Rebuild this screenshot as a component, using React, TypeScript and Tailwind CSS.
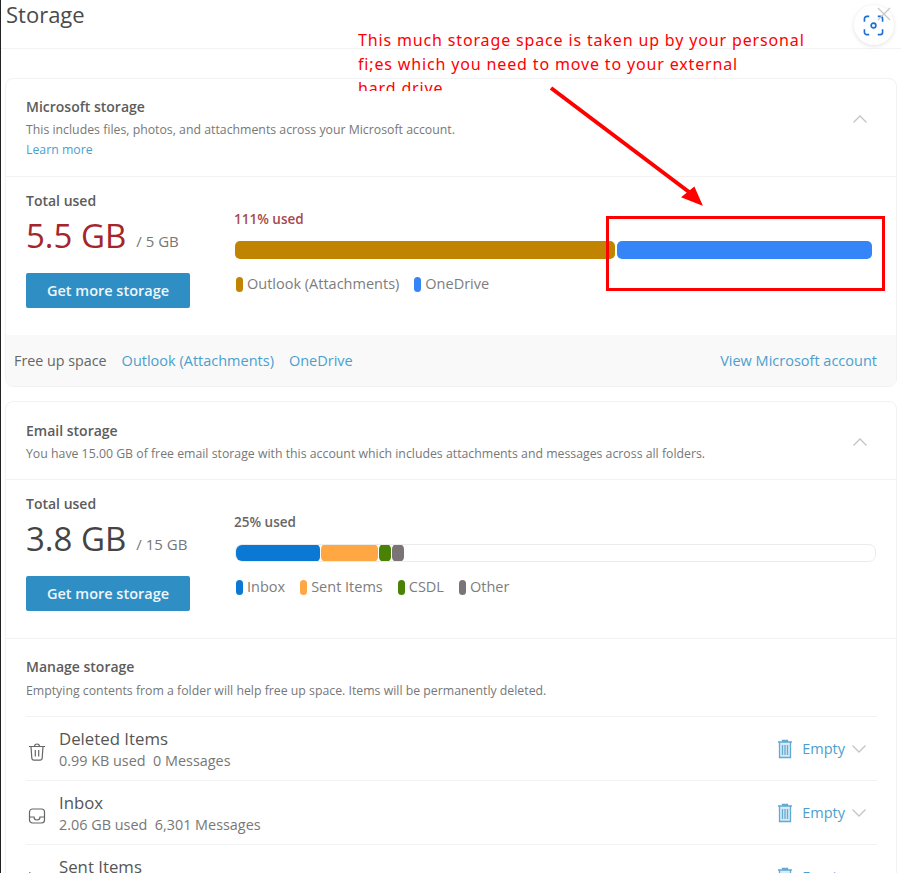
const sans = "font-['Open_Sans','Noto_Sans',sans-serif]";

function Dot({ color }: { color: string }) {
  return <span className={`ml-px inline-block h-[15px] w-[7px] rounded-full ${color}`} />;
}

function Legend({ items }: { items: [string, string][] }) {
  return (
    <div className="mt-[15px] flex h-[20px] items-center gap-[14px]">
      {items.map(([label, color]) => (
        <span key={label} className="flex items-center gap-[4px] text-[14.5px] text-[#7d7d7d]">
          <Dot color={color} />
          {label}
        </span>
      ))}
    </div>
  );
}

function Chevron({ up }: { up?: boolean }) {
  return (
    <svg width="16" height="10" viewBox="0 0 16 10" fill="none" stroke="#c4c4c4" strokeWidth="1.3">
      <path d={up ? "M1.5 8.5 8 2l6.5 6.5" : "M1.5 1.5 8 8l6.5-6.5"} />
    </svg>
  );
}

function Total({ value, quota, red }: { value: string; quota: string; red?: boolean }) {
  return (
    <div className="w-[209px] shrink-0">
      <div className="text-[14px] leading-[20px] font-semibold text-[#5c5c5c]">Total used</div>
      <div className="mt-[1px] flex h-[48px] items-center">
        <span className={`text-[33px] leading-[44px] font-medium ${red ? "text-[#a4262c]" : "text-[#444]"}`}>{value}</span>
        <span className="mt-[10px] ml-[10px] text-[15px] text-[#777]">{quota}</span>
      </div>
      <button className="mt-[13px] h-[35px] w-[164px] rounded-[2px] bg-[#2f8fc4] text-[14.5px] font-semibold text-[#eef6fb]">
        Get more storage
      </button>
    </div>
  );
}

function TrashOutline() {
  return (
    <svg width="18" height="20" viewBox="0 0 18 20" fill="none" stroke="#666" strokeWidth="1.2">
      <path d="M1 4.5h16M6.5 4.5C6.5 3 7.5 2 9 2s2.500 1 2.500 2.500M3 4.500l.8 11.500c.1 1.300 1 2.200 2.200 2.200h6c1.200 0 2.100-.9 2.200-2.200L15 4.500M7.300 8v6.500M10.700 8v6.500" />
    </svg>
  );
}

function InboxIcon() {
  return (
    <svg width="18" height="18" viewBox="0 0 18 18" fill="none" stroke="#666" strokeWidth="1.2">
      <rect x="1.500" y="2" width="15" height="14" rx="3" />
      <path d="M1.500 10H6c0 1.700 1.300 3 3 3s3-1.300 3-3h4.500" />
    </svg>
  );
}

function SentIcon() {
  return (
    <svg width="18" height="18" viewBox="0 0 18 18" fill="none" stroke="#666" strokeWidth="1.2">
      <path d="M2 2l14 7-14 7 2.500-7L2 2ZM4.500 9H16" />
    </svg>
  );
}

function EmptyAction() {
  return (
    <div className="flex items-center">
      <svg width="16" height="20" viewBox="0 0 16 20" fill="#d7eaf5" stroke="#62aad3" strokeWidth="1.300">
        <path d="M5.500 2.500V1.500h5v1M1 3h14M2.500 3v15.500h11V3M5.500 6v10M8 6v10M10.500 6v10" />
      </svg>
      <span className="ml-[9px] text-[14.5px] text-[#4b9fcf]">Empty</span>
      <span className="ml-[6px] flex"><Chevron /></span>
    </div>
  );
}

function Row({ icon, name, detail }: { icon: React.ReactNode; name: string; detail: string }) {
  return (
    <div className="flex h-[64px] items-center border-t border-[#f2f2f2]">
      <div className="mt-[6px] flex w-[33px] justify-start pl-[2px]">{icon}</div>
      <div className="flex-1 pt-[2px]">
        <div className="text-[16.800px] leading-[22px] text-[#555]">{name}</div>
        <div className="mt-[1px] h-[20px] text-[14.400px] leading-[20px] whitespace-pre text-[#777]">{detail}</div>
      </div>
      <div className="pr-[10px]"><EmptyAction /></div>
    </div>
  );
}

export default function App() {
  return (
    <div className={`relative h-[873px] w-[901px] overflow-hidden border-l border-[#222] bg-white ${sans}`}>
      <header className="h-[49px] border-b border-[#f3f3f3] pl-[5px]">
        <h1 className="text-[22px] leading-[28px] font-medium text-[#4a4a4a]">Storage</h1>
      </header>

      <div className="pr-[4px] pl-[4px] pt-[29px]">
        <section className="h-[309px] rounded-[8px] border border-[#f2f2f2]">
          <div className="flex h-[98px] border-b border-[#f2f2f2] pl-[20px]">
            <div className="flex-1 pt-[18px]">
              <div className="text-[14px] leading-[20px] font-semibold text-[#5c5c5c]">Microsoft storage</div>
              <div className="mt-[3px] text-[12.300px] leading-[20px] text-[#777]">This includes files, photos, and attachments across your Microsoft account.</div>
              <div className="text-[12.300px] leading-[20px] text-[#4b9fcf]">Learn more</div>
            </div>
            <div className="pt-[35px] pr-[28px]"><Chevron up /></div>
          </div>
          <div className="flex h-[158px] pl-[20px] pt-[14px]">
            <Total value="5.5 GB" quota="/ 5 GB" red />
            <div className="w-[637px] pt-[18px]">
              <div className="-ml-px text-[13.500px] leading-[20px] font-semibold text-[#a8484d]">111% used</div>
              <div className="mt-[12px] flex h-[18px] gap-[2px]">
                <div className="h-full w-[380px] rounded-[5px] bg-[#c08400]" />
                <div className="h-full flex-1 rounded-[5px] bg-[#3584f8]" />
              </div>
              <Legend items={[["Outlook (Attachments)", "bg-[#c08400]"], ["OneDrive", "bg-[#3584f8]"]]} />
            </div>
          </div>
          <div className="flex h-[51px] items-center rounded-b-[8px] bg-[#f9f9f9] pr-[19px] pl-[8px] text-[14.500px]">
            <span className="text-[14.300px] text-[#666]">Free up space</span>
            <span className="ml-[15px] text-[#4b9fcf]">Outlook (Attachments)</span>
            <span className="ml-[15px] text-[#4b9fcf]">OneDrive</span>
            <span className="ml-auto text-[#4b9fcf]">View Microsoft account</span>
          </div>
        </section>

        <section className="mt-[14px] rounded-[8px] border border-[#f2f2f2]">
          <div className="flex h-[78px] border-b border-[#f2f2f2] pl-[20px]">
            <div className="flex-1 pt-[19px]">
              <div className="text-[14px] leading-[20px] font-semibold text-[#5c5c5c]">Email storage</div>
              <div className="text-[12.300px] leading-[26px] text-[#777]">You have 15.00 GB of free email storage with this account which includes attachments and messages across all folders.</div>
            </div>
            <div className="pt-[35px] pr-[28px]"><Chevron up /></div>
          </div>
          <div className="flex h-[159px] border-b border-[#f2f2f2] pl-[20px] pt-[14px]">
            <Total value="3.8 GB" quota="/ 15 GB" />
            <div className="w-[641px] pt-[18px]">
              <div className="-ml-px text-[13.500px] leading-[20px] font-semibold text-[#666]">25% used</div>
              <div className="mt-[12px] flex h-[18px] gap-[1px] overflow-hidden rounded-[7px] border border-[#ececec]">
                <div className="-my-px w-[84px] rounded-[5px] bg-[#0b78d4]" />
                <div className="-my-px w-[57px] rounded-[5px] bg-[#ffa742]" />
                <div className="-my-px w-[12px] rounded-[5px] bg-[#498205]" />
                <div className="-my-px w-[12px] rounded-[5px] bg-[#7a7574]" />
              </div>
              <Legend items={[["Inbox", "bg-[#0b78d4]"], ["Sent Items", "bg-[#ffa742]"], ["CSDL", "bg-[#498205]"], ["Other", "bg-[#7a7574]"]]} />
            </div>
          </div>
          <div className="pr-[19px] pl-[20px] pt-[18px]">
            <div className="text-[14px] leading-[20px] font-semibold text-[#5c5c5c]">Manage storage</div>
            <div className="mt-[4px] h-[35px] text-[12.300px] leading-[20px] text-[#777]">Emptying contents from a folder will help free up space. Items will be permanently deleted.</div>
            <Row icon={<TrashOutline />} name="Deleted Items" detail="0.99 KB used  0 Messages" />
            <Row icon={<InboxIcon />} name="Inbox" detail="2.06 GB used  6,301 Messages" />
            <Row icon={<SentIcon />} name="Sent Items" detail="" />
          </div>
        </section>
      </div>

      {/* Annotation overlay */}
      <div className="absolute top-[28px] left-[357px] h-[63px] w-[470px] overflow-hidden text-[16px] leading-[24px] tracking-[0.850px] text-[#ff0000] font-['Noto_Sans',sans-serif]">
        This much storage space is taken up by your personal
        <br />
        fi;es which you need to move to your external
        <br />
        hard drive
      </div>
      <svg className="absolute top-0 left-0" width="901" height="300" fill="none">
        <path d="M550 88 692 195" stroke="#ff0000" strokeWidth="4" />
        <path d="M700 204 682 197 693 188Z" fill="#ff0000" stroke="#ff0000" strokeWidth="2" />
      </svg>
      <div className="absolute top-[216px] left-[605px] h-[75px] w-[279px] border-[3px] border-[#ff0000]" />

      {/* Floating lens button */}
      <div className="absolute top-[5px] right-[7px] flex h-[40px] w-[40px] items-center justify-center rounded-full bg-white shadow-[0_1px_4px_rgba(0,0,0,0.12)]">
        <svg className="-ml-[2px]" width="21" height="21" viewBox="0 0 22 22" fill="none" stroke="#1a6fd0" strokeWidth="1.700">
          <path d="M1.500 7V4a2.500 2.500 0 0 1 2.500-2.500h2.500M15.500 1.500H18A2.500 2.500 0 0 1 20.500 4v3M20.500 15v3a2.500 2.500 0 0 1-2.500 2.500h-2.500M6.500 20.500H4A2.500 2.500 0 0 1 1.500 18v-3" />
          <circle cx="11" cy="11" r="2.500" />
        </svg>
      </div>
      <svg className="absolute top-[7px] left-[876px]" width="14" height="14" fill="none" stroke="#c8c8c8" strokeWidth="1.300">
        <path d="M1 13 13 1M1 1l12 12" />
      </svg>
    </div>
  );
}
